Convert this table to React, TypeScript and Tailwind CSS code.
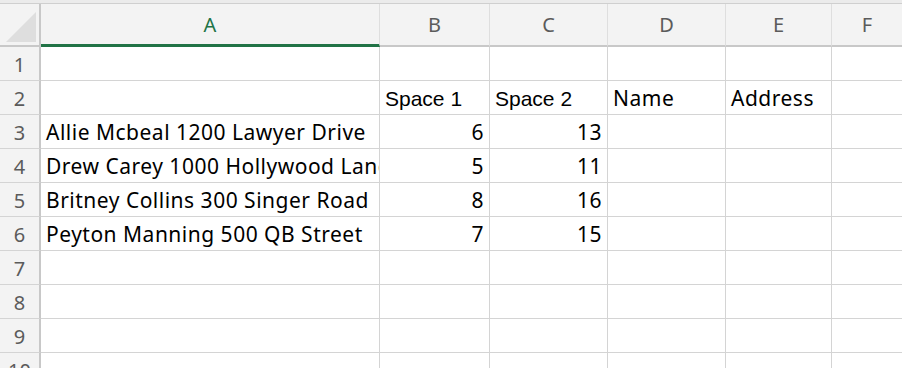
import React from 'react';

type Cell = { text: string; align?: 'left' | 'right'; font?: 'arial' };

const columns = [
  { key: 'A', width: 'w-[339px]' },
  { key: 'B', width: 'w-[110px]' },
  { key: 'C', width: 'w-[118px]' },
  { key: 'D', width: 'w-[118px]' },
  { key: 'E', width: 'w-[106px]' },
];

// sheet contents, one entry per row (A..E)
const rows: (Cell | null)[][] = [
  [null, null, null, null, null],
  [null, { text: 'Space 1', font: 'arial' }, { text: 'Space 2', font: 'arial' }, { text: 'Name' }, { text: 'Address' }],
  [{ text: 'Allie Mcbeal 1200 Lawyer Drive' }, { text: '6', align: 'right' }, { text: '13', align: 'right' }, null, null],
  [{ text: 'Drew Carey 1000 Hollywood Lane' }, { text: '5', align: 'right' }, { text: '11', align: 'right' }, null, null],
  [{ text: 'Britney Collins 300 Singer Road' }, { text: '8', align: 'right' }, { text: '16', align: 'right' }, null, null],
  [{ text: 'Peyton Manning 500 QB Street' }, { text: '7', align: 'right' }, { text: '15', align: 'right' }, null, null],
  [null, null, null, null, null],
  [null, null, null, null, null],
  [null, null, null, null, null],
  [null, null, null, null, null],
];

const SheetCell: React.FC<{ cell: Cell | null; width: string }> = ({ cell, width }) => (
  <div
    className={`${width} shrink-0 h-[34px] border-r border-b border-[#d4d4d4] flex items-end pb-[2px] overflow-hidden whitespace-nowrap ${
      cell?.align === 'right' ? 'justify-end pr-[5px]' : 'pl-[5px]'
    }`}
  >
    {cell && (
      <span
        className={`leading-[27px] text-[21px] text-black ${
          cell.font === 'arial'
            ? "font-['Liberation_Sans',Arial,sans-serif]"
            : "font-['Noto_Sans',sans-serif] tracking-[0.5px]"
        }`}
      >
        {cell.text}
      </span>
    )}
  </div>
);

export default function App() {
  return (
    <div className="w-[902px] h-[368px] overflow-hidden bg-white font-['Noto_Sans',sans-serif]">
      <div className="h-[3px] bg-[#ebebeb]" />

      {/* column headers */}
      <div className="flex h-[44px] border-t border-[#cfcfcf] bg-[#f3f3f3]">
        <div className="w-[41px] shrink-0 border-r-2 border-b-2 border-[#c8c8c8] relative">
          <svg width="41" height="42" className="absolute left-0 top-0">
            <polygon points="6,38 36,38 36,8" fill="#dedede" />
          </svg>
        </div>
        {columns.map((col) => (
          <div
            key={col.key}
            className={`${col.width} shrink-0 flex items-center justify-center border-r ${
              col.key === 'A'
                ? 'border-b-[3px] border-b-[#217346] border-r-[#dedede] text-[#217346]'
                : 'border-b-2 border-b-[#c8c8c8] border-r-[#dedede] text-[#5b5b5b]'
            }`}
          >
            <span className="text-[20px] leading-[27px]">{col.key}</span>
          </div>
        ))}
        <div className="flex-1 flex items-center justify-center border-b-2 border-[#c8c8c8] text-[#5b5b5b]">
          <span className="text-[20px] leading-[27px]">F</span>
        </div>
      </div>

      {/* grid body */}
      {rows.map((row, i) => (
        <div key={i} className="flex">
          <div className="w-[41px] shrink-0 h-[34px] bg-[#f3f3f3] border-r-2 border-r-[#c8c8c8] border-b border-b-[#d4d4d4] flex items-end justify-center pb-[2px]">
            <span className="text-[20px] leading-[27px] text-[#5b5b5b]">{i + 1}</span>
          </div>
          {row.map((cell, j) => (
            <SheetCell key={j} cell={cell} width={columns[j].width} />
          ))}
          <div className="flex-1 h-[34px] border-b border-[#d4d4d4]" />
        </div>
      ))}
    </div>
  );
}
